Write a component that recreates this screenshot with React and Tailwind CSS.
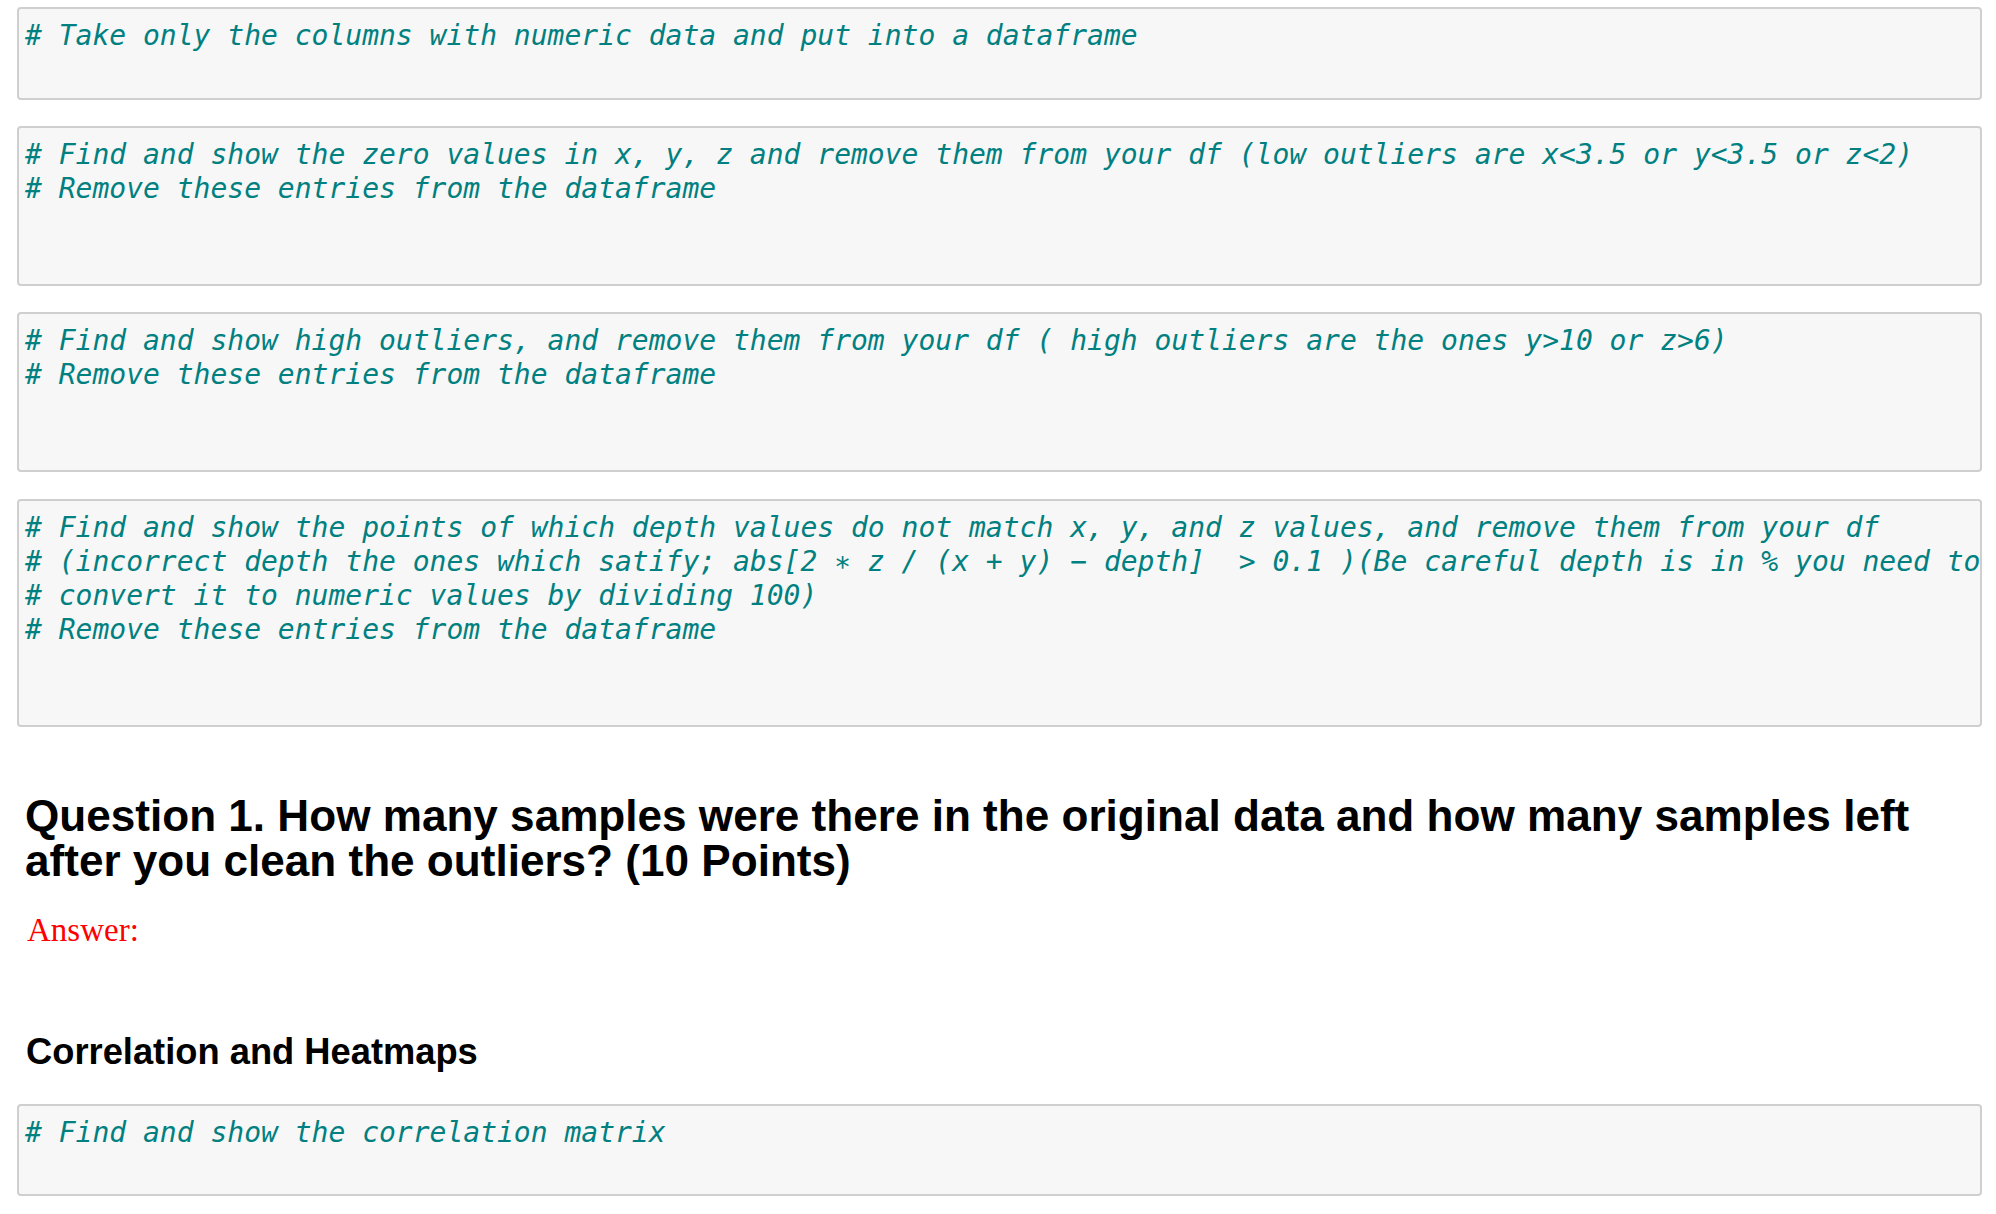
import React from "react";

function CodeCell({ lines, total, className = "" }) {
  const all = [...lines];
  while (all.length < total) all.push("");
  return (
    <div
      className={`mr-[14px] ml-[17px] overflow-hidden rounded-[4px] border-2 border-[#cfcfcf] bg-[#f7f7f7] pt-[10px] pr-0 pb-[10px] pl-[6px] ${className}`}
    >
      {all.map((l, i) => (
        <div
          key={i}
          className="h-[34px] whitespace-pre font-['DejaVu_Sans_Mono',monospace] text-[28px] leading-[34px] italic text-[#008080]"
        >
          {l === "" ? "\u00a0" : l}
        </div>
      ))}
    </div>
  );
}

export default function App() {
  return (
    <div className="min-h-[1214px] w-full bg-white pt-[7px]">
      <CodeCell
        className="pb-[11px]"
        total={2}
        lines={["# Take only the columns with numeric data and put into a dataframe"]}
      />
      <CodeCell
        className="mt-[26px]"
        total={4}
        lines={[
          "# Find and show the zero values in x, y, z and remove them from your df (low outliers are x<3.5 or y<3.5 or z<2)",
          "# Remove these entries from the dataframe",
        ]}
      />
      <CodeCell
        className="mt-[26px]"
        total={4}
        lines={[
          "# Find and show high outliers, and remove them from your df ( high outliers are the ones y>10 or z>6)",
          "# Remove these entries from the dataframe",
        ]}
      />
      <CodeCell
        className="mt-[27px]"
        total={6}
        lines={[
          "# Find and show the points of which depth values do not match x, y, and z values, and remove them from your df",
          "# (incorrect depth the ones which satify; abs[2 \u2217 z / (x + y) \u2212 depth]  > 0.1 )(Be careful depth is in % you need to",
          "# convert it to numeric values by dividing 100)",
          "# Remove these entries from the dataframe",
        ]}
      />

      <h3 className="mt-[66px] mr-[60px] ml-[25px] font-['Liberation_Sans',Arial,sans-serif] text-[44.1px] leading-[45px] font-bold text-black">
        Question 1. How many samples were there in the original data and how many samples left after you clean the outliers? (10 Points)
      </h3>

      <p className="mt-[28px] ml-[27px] font-['Liberation_Serif','Times_New_Roman',serif] text-[33px] leading-[38px] text-[#ff0000]">
        Answer:
      </p>

      <h4 className="mt-[83px] ml-[26px] font-['Liberation_Sans',Arial,sans-serif] text-[36.3px] leading-[40px] font-bold text-black">
        Correlation and Heatmaps
      </h4>

      <CodeCell
        className="mt-[32px]"
        total={2}
        lines={["# Find and show the correlation matrix"]}
      />
    </div>
  );
}
